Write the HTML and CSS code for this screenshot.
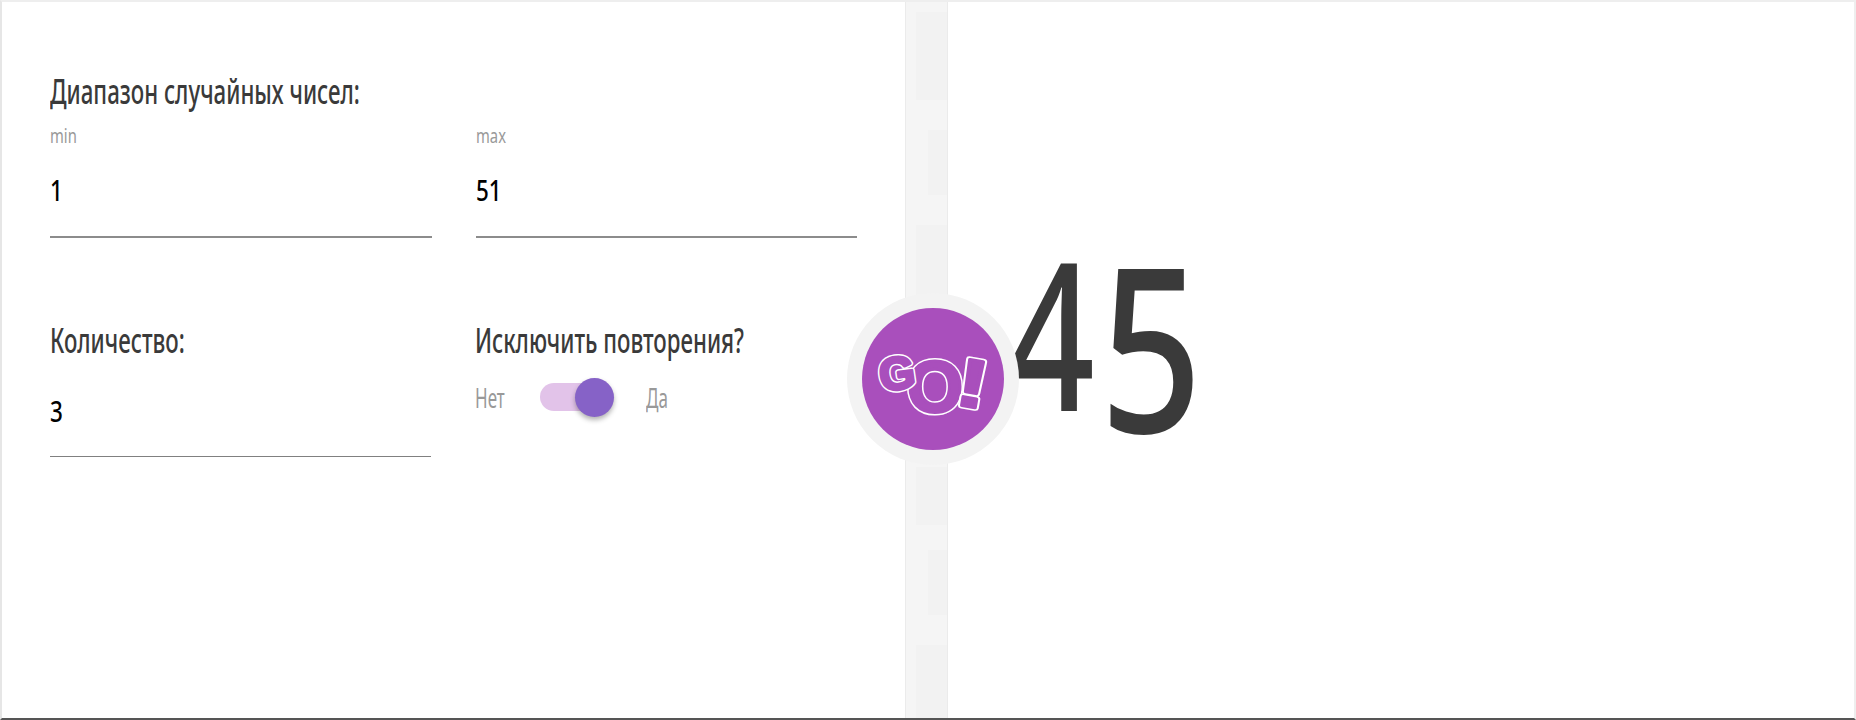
FILE: index.html
```html
<!DOCTYPE html>
<html>
<head>
<meta charset="utf-8">
<link rel="stylesheet" href="styles.css">
</head>
<body>

<div class="app">

  <div class="settings">
    <h2 class="title"><span class="narrow">Диапазон случайных чисел:</span></h2>
    <div class="row">
      <div class="field">
        <div class="small_label"><span class="narrow">min</span></div>
        <div class="value"><span class="narrow">1</span></div>
      </div>
      <div class="field">
        <div class="small_label"><span class="narrow">max</span></div>
        <div class="value"><span class="narrow">51</span></div>
      </div>
    </div>

    <div class="row row2">
      <div class="col">
        <h2 class="title"><span class="narrow">Количество:</span></h2>
        <div class="value thin"><span class="narrow">3</span></div>
      </div>
      <div class="col">
        <h2 class="title"><span class="narrow">Исключить повторения?</span></h2>
        <div class="switch_row">
          <span class="switch_text"><span class="narrow">Нет</span></span>
          <span class="switch"><span class="knob"></span></span>
          <span class="switch_text"><span class="narrow">Да</span></span>
        </div>
      </div>
    </div>
  </div>

  <div class="strip">
    <div class="block b1"></div>
    <div class="block b2"></div>
    <div class="block b3"></div>
    <div class="block b4"></div>
    <div class="block b5"></div>
    <div class="block b6"></div>
  </div>

  <div class="result"><span class="four">4</span><span class="five">5</span></div>

  <!-- go button sits over the strip -->
  <div class="go_ring">
    <div class="go_btn">
      <svg class="go_logo" width="142" height="142" viewBox="-11 -31 142 142">
        <text class="outer big_o" x="62" y="73" text-anchor="middle">O</text>
        <text class="inner big_o" x="62" y="73" text-anchor="middle">O</text>
        <g transform="rotate(-8 25 34)">
          <text class="outer small_g" x="24" y="50" text-anchor="middle">G</text>
          <text class="inner small_g" x="24" y="50" text-anchor="middle">G</text>
        </g>
        <g transform="rotate(10 100 43) translate(100 0) scale(1.35 1) translate(-100 0)">
          <text class="outer mark" x="100" y="68" text-anchor="middle">!</text>
          <text class="inner mark" x="100" y="68" text-anchor="middle">!</text>
        </g>
      </svg>
    </div>
  </div>

</div>

</body>
</html>
```

FILE: styles.css
```css
* {
  box-sizing: border-box;
}

html, body {
  margin: 0;
  height: 100%;
  background: #ffffff;
}

body {
  font-family: "Noto Sans", sans-serif;
}

.app {
  position: relative;
  display: flex;
  height: 720px;
  border-top: 2px solid #eeeeee;
  border-left: 2px solid #e6e6e6;
  border-right: 2px solid #eeeeee;
  border-bottom: 2px solid #555555;
  overflow: hidden;
}

/* the design font is condensed, none is installed, so squeeze */
.narrow {
  display: inline-block;
  white-space: nowrap;
  transform-origin: left center;
}

.settings {
  width: 903px;
  padding: 69px 48px 0 48px;
}

.title {
  margin: 0;
  height: 40px;
  font-size: 35px;
  line-height: 40px;
  font-weight: 500;
  color: #3a3a3a;
}

.title .narrow {
  transform: scaleX(0.636);
}

.row {
  display: flex;
  gap: 44px;
}

.row2 {
  margin-top: 82px;
}

.field, .col {
  width: 382px;
}

.small_label {
  margin-top: 13px;
  font-size: 20px;
  line-height: 24px;
  color: #999999;
}

.small_label .narrow {
  transform: scaleX(0.74);
}

.value {
  margin-top: 15px;
  height: 75px;
  padding-top: 10px;
  font-size: 28px;
  line-height: 34px;
  font-weight: 500;
  color: #000000;
  border-bottom: 2px solid #8c8c8c;
}

.value .narrow {
  transform: scaleX(0.8);
}

.thin {
  margin-top: 19px;
  height: 78px;
  padding-top: 15px;
  border-bottom: 1px solid #808080;
}

.switch_row {
  display: flex;
  align-items: center;
  margin-top: 17px;
  height: 40px;
  font-size: 27px;
  color: #999999;
}

.switch_text {
  display: block;
  width: 65px;
}

.switch_text .narrow {
  transform: scaleX(0.63);
}

.switch {
  position: relative;
  display: block;
  width: 62px;
  height: 28px;
  margin-right: 44px;
  border-radius: 14px;
  background: #e2c3e9;
}

.knob {
  position: absolute;
  right: -12px;
  top: -5px;
  width: 39px;
  height: 39px;
  border-radius: 50%;
  background: #8662c7;
  box-shadow: 0 3px 5px rgba(0, 0, 0, 0.3);
}

.strip {
  display: flex;
  flex-direction: column;
  align-items: flex-end;
  width: 43px;
  padding-top: 10px;
  background: #f5f5f5;
  border-left: 1px solid #ebebeb;
  border-right: 1px solid #ebebeb;
}

.block {
  background: #f2f2f2;
}

.b1 { width: 31px; height: 88px; }
.b2 { width: 19px; height: 65px; margin-top: 30px; }
.b3 { width: 31px; height: 73px; margin-top: 30px; }
.b4 { width: 31px; height: 58px; margin-top: 169px; }
.b5 { width: 19px; height: 65px; margin-top: 25px; }
.b6 { width: 31px; height: 73px; margin-top: 30px; }

.result {
  display: flex;
  align-items: flex-start;
  padding: 227px 0 0 60px;
  color: #3a3a3a;
}

.four, .five {
  display: block;
  transform-origin: left top;
  font-weight: 500;
}

.four {
  width: 92px;
  font-size: 205px;
  line-height: 205px;
  transform: scaleX(0.74);
}

.five {
  margin-top: 1px;
  font-size: 229px;
  line-height: 229px;
  transform: scaleX(0.78);
}

.go_ring {
  position: absolute;
  left: 845px;
  top: 291px;
  display: flex;
  align-items: center;
  justify-content: center;
  width: 172px;
  height: 172px;
  border-radius: 50%;
  background: #f3f3f3;
}

.go_btn {
  display: flex;
  align-items: center;
  justify-content: center;
  width: 142px;
  height: 142px;
  border-radius: 50%;
  background: #a94fbc;
}

.go_logo text {
  font-family: "Liberation Sans", sans-serif;
  font-weight: bold;
  stroke-linejoin: round;
}

.go_logo .outer {
  fill: #ffffff;
  stroke: #ffffff;
  stroke-width: 6px;
}

.go_logo .inner {
  fill: #a94fbc;
  stroke: #a94fbc;
  stroke-width: 3px;
}

.big_o { font-size: 72px; }
.small_g { font-size: 46px; }
.mark { font-size: 68px; }
```
